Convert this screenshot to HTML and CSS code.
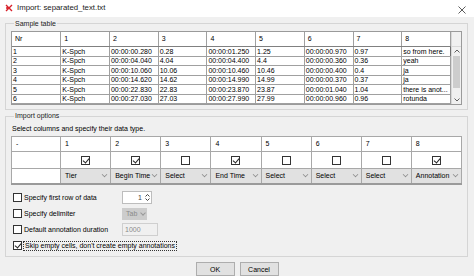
FILE: index.html
```html
<!DOCTYPE html>
<html lang="en">
<head>
    <meta charset="UTF-8">
    <title>Import: separated_text.txt</title>
    <link rel="stylesheet" href="styles.css">
</head>
<body>
    <div class="window">
        <div class="titlebar">
            <svg class="app-icon" width="8" height="8" viewBox="0 0 8 8">
                <path d="M1 1 L7 7 M7 1 L1 7 M1 4 H3" stroke="#d8202a" stroke-width="1.4" fill="none"/>
            </svg>
            <span class="title">Import: separated_text.txt</span>
            <svg class="close" width="8" height="8" viewBox="0 0 8 8">
                <path d="M0.5 0.5 L7.5 7.5 M7.5 0.5 L0.5 7.5" stroke="#333" stroke-width="0.8" fill="none"/>
            </svg>
        </div>

        <fieldset class="group sample-group">
            <legend>Sample table</legend>
            <div class="table-wrap">
                <table class="sample-table">
                    <thead>
                        <tr><th>Nr</th><th>1</th><th>2</th><th>3</th><th>4</th><th>5</th><th>6</th><th>7</th><th>8</th></tr>
                    </thead>
                    <tbody>
                        <tr><td>1</td><td>K-Spch</td><td>00:00:00.280</td><td>0.28</td><td>00:00:01.250</td><td>1.25</td><td>00:00:00.970</td><td>0.97</td><td class="focus">so from here.</td></tr>
                        <tr><td>2</td><td>K-Spch</td><td>00:00:04.040</td><td>4.04</td><td>00:00:04.400</td><td>4.4</td><td>00:00:00.360</td><td>0.36</td><td>yeah</td></tr>
                        <tr><td>3</td><td>K-Spch</td><td>00:00:10.060</td><td>10.06</td><td>00:00:10.460</td><td>10.46</td><td>00:00:00.400</td><td>0.4</td><td>ja</td></tr>
                        <tr><td>4</td><td>K-Spch</td><td>00:00:14.620</td><td>14.62</td><td>00:00:14.990</td><td>14.99</td><td>00:00:00.370</td><td>0.37</td><td>ja</td></tr>
                        <tr><td>5</td><td>K-Spch</td><td>00:00:22.830</td><td>22.83</td><td>00:00:23.870</td><td>23.87</td><td>00:00:01.040</td><td>1.04</td><td>there is anot...</td></tr>
                        <tr><td>6</td><td>K-Spch</td><td>00:00:27.030</td><td>27.03</td><td>00:00:27.990</td><td>27.99</td><td>00:00:00.960</td><td>0.96</td><td>rotunda</td></tr>
                    </tbody>
                </table>
                <div class="scrollbar">
                    <div class="corner"></div>
                    <div class="arrow">
                        <svg width="6" height="4" viewBox="0 0 6 4"><path d="M0.5 3.5 L3 1 L5.5 3.5" stroke="#606060" fill="none"/></svg>
                    </div>
                    <div class="track"><div class="thumb"></div></div>
                    <div class="arrow">
                        <svg width="6" height="4" viewBox="0 0 6 4"><path d="M0.5 0.5 L3 3 L5.5 0.5" stroke="#606060" fill="none"/></svg>
                    </div>
                </div>
            </div>
        </fieldset>

        <fieldset class="group options-group">
            <legend>Import options</legend>
            <p class="hint">Select columns and specify their data type.</p>
            <table class="column-table">
                <tr class="num-row">
                    <td>-</td><td>1</td><td>2</td><td>3</td><td>4</td><td>5</td><td>6</td><td>7</td><td>8</td>
                </tr>
                <tr class="check-row">
                    <td></td>
                    <td><span class="checkbox checked"></span></td>
                    <td><span class="checkbox checked"></span></td>
                    <td><span class="checkbox"></span></td>
                    <td><span class="checkbox checked"></span></td>
                    <td><span class="checkbox"></span></td>
                    <td><span class="checkbox"></span></td>
                    <td><span class="checkbox"></span></td>
                    <td><span class="checkbox checked"></span></td>
                </tr>
                <tr class="type-row">
                    <td class="blank"></td>
                    <td><span class="combo">Tier</span></td>
                    <td><span class="combo">Begin Time</span></td>
                    <td><span class="combo">Select</span></td>
                    <td><span class="combo">End Time</span></td>
                    <td><span class="combo">Select</span></td>
                    <td><span class="combo">Select</span></td>
                    <td><span class="combo">Select</span></td>
                    <td><span class="combo">Annotation</span></td>
                </tr>
            </table>

            <div class="option">
                <label><span class="checkbox"></span>Specify first row of data</label>
                <div class="spinner">
                    <span class="spin-value">1</span>
                    <span class="spin-arrows">
                        <svg width="5" height="3" viewBox="0 0 5 3"><path d="M0.5 2.5 L2.5 0.5 L4.5 2.5" stroke="#444" fill="none"/></svg>
                        <svg width="5" height="3" viewBox="0 0 5 3"><path d="M0.5 0.5 L2.5 2.5 L4.5 0.5" stroke="#444" fill="none"/></svg>
                    </span>
                </div>
            </div>
            <div class="option">
                <label><span class="checkbox"></span>Specify delimiter</label>
                <div class="small-combo">Tab</div>
            </div>
            <div class="option">
                <label><span class="checkbox"></span>Default annotation duration</label>
                <div class="field">1000</div>
            </div>
            <div class="option last">
                <label><span class="checkbox checked"></span><span class="focused">Skip empty cells, don't create empty annotations</span></label>
            </div>
        </fieldset>

        <div class="buttons">
            <button class="btn">OK</button>
            <button class="btn">Cancel</button>
        </div>
    </div>
</body>
</html>
```

FILE: styles.css
```css
* {
    margin: 0;
    padding: 0;
    box-sizing: border-box;
}

body {
    width: 474px;
    height: 276px;
    overflow: hidden;
    background: #f0f0f0;
    font-family: "Liberation Sans", Arial, sans-serif;
    font-size: 7px;
    line-height: 8px;
    color: #000;
}

.window {
    display: flex;
    flex-direction: column;
    height: 276px;
}

/* title bar */

.titlebar {
    height: 17px;
    background: #fff;
    display: flex;
    align-items: center;
    padding: 0 8px 0 5px;
}

.app-icon {
    margin-right: 4px;
}

.title {
    font-size: 7.8px;
    color: #222;
    flex: 1;
}

.close {
    margin-top: 3px;
}

/* group boxes */

.group {
    border: 1px solid #d5d5d5;
    margin: 3px 7px 0 5px;
    padding: 3px 5px 4px 5px;
}

.group legend {
    margin-left: 3px;
    padding: 0 1px;
    color: #222;
    line-height: 8px;
}

/* sample table */

.table-wrap {
    display: flex;
    width: 451px;
    border: 1px solid #9a9a9a;
    background: #fff;
}

.sample-table {
    border-collapse: collapse;
    width: 440px;
    table-layout: fixed;
}

.sample-table th,
.sample-table td {
    border: 1px solid #a0a0a0;
    text-align: left;
    font-weight: normal;
    white-space: nowrap;
    overflow: hidden;
}

.sample-table tr:first-child th,
.sample-table tr:first-child td {
    border-top: none;
}

.sample-table th:first-child,
.sample-table td:first-child {
    border-left: none;
}

.sample-table th {
    height: 15px;
    padding: 0 3px;
    border-bottom: 1px solid #808080;
}

.sample-table td {
    height: 9.5px;
    padding: 0 1px;
}

.sample-table td.focus {
    border-right: 1px solid #707070;
}

.scrollbar {
    width: 10px;
    display: flex;
    flex-direction: column;
    background: #f0f0f0;
    border-left: 1px solid #d8d8d8;
}

.scrollbar .corner {
    height: 15px;
    border-bottom: 1px solid #d8d8d8;
}

.scrollbar .arrow {
    height: 9px;
    display: flex;
    align-items: center;
    justify-content: center;
}

.scrollbar .track {
    flex: 1;
    padding: 0 1px;
}

.scrollbar .thumb {
    height: 32px;
    background: #cdcdcd;
}

/* import options */

.options-group {
    margin-top: 2px;
    padding-top: 5px;
    padding-bottom: 0;
    height: 145px;
}

.hint {
    margin: 0 0 3px 1px;
}

.column-table {
    border-collapse: collapse;
    table-layout: fixed;
    width: 451px;
    background: #fff;
    border: 1px solid #9a9a9a;
}

.column-table td {
    border: 1px solid #a8a8a8;
    width: 50px;
    padding: 0;
}

.column-table td:first-child {
    width: 49px;
}

.num-row td {
    height: 15px;
    padding-left: 4px;
}

.check-row td {
    height: 17px;
    text-align: center;
}

.type-row td {
    height: 15px;
    background: #e1e1e1;
    border-bottom: 2px solid #9a9a9a;
}

.type-row td.blank {
    background: #fff;
}

.combo {
    display: flex;
    align-items: center;
    justify-content: space-between;
    padding: 0 3px 0 4px;
}

.combo::after {
    content: "";
    width: 4px;
    height: 4px;
    border-right: 1px solid #888;
    border-bottom: 1px solid #888;
    transform: rotate(45deg) scale(0.8);
    margin-top: -3px;
}

.checkbox {
    display: inline-block;
    flex-shrink: 0;
    width: 9px;
    height: 9px;
    border: 1px solid #333;
    background: #fff;
    vertical-align: middle;
    position: relative;
}

.checkbox.checked::after {
    content: "";
    position: absolute;
    left: 2px;
    top: 0px;
    width: 3px;
    height: 5px;
    border-right: 1px solid #222;
    border-bottom: 1px solid #222;
    transform: rotate(40deg);
}

.option {
    height: 16px;
    display: flex;
    align-items: center;
}

.option:first-of-type {
    margin-top: 5px;
}

.option label {
    width: 111px;
    display: flex;
    align-items: center;
    white-space: nowrap;
}

.option.last label {
    width: auto;
}

.option .checkbox {
    margin: 0 2px 0 2px;
}

.focused {
    outline: 1px dotted #333;
    padding: 0 1px;
}

.spinner {
    width: 30px;
    height: 13px;
    border: 1px solid #bdbdbd;
    background: #fff;
    display: flex;
    align-items: center;
    justify-content: flex-end;
}

.spin-value {
    margin-right: 3px;
    color: #444;
}

.spin-arrows {
    display: flex;
    flex-direction: column;
    gap: 1px;
    margin-right: 1px;
}

.spin-arrows svg {
    display: block;
}

.small-combo {
    width: 25px;
    height: 12px;
    background: #cccccc;
    color: #8a8a8a;
    display: flex;
    align-items: center;
    padding-left: 4px;
    gap: 4px;
}

.small-combo::after {
    content: "";
    width: 3px;
    height: 3px;
    border-right: 1px solid #999;
    border-bottom: 1px solid #999;
    transform: rotate(45deg);
    margin-top: -2px;
}

.field {
    width: 36px;
    height: 13px;
    border: 1px solid #cfcfcf;
    background: #f0f0f0;
    color: #8a8a8a;
    padding-left: 2px;
    display: flex;
    align-items: center;
}

/* bottom buttons */

.buttons {
    display: flex;
    justify-content: center;
    gap: 5px;
    margin-top: 5px;
}

.btn {
    width: 39px;
    height: 14px;
    font-family: inherit;
    font-size: 7px;
    background: #e1e1e1;
    border: 1px solid #adadad;
    color: #000;
}
```
